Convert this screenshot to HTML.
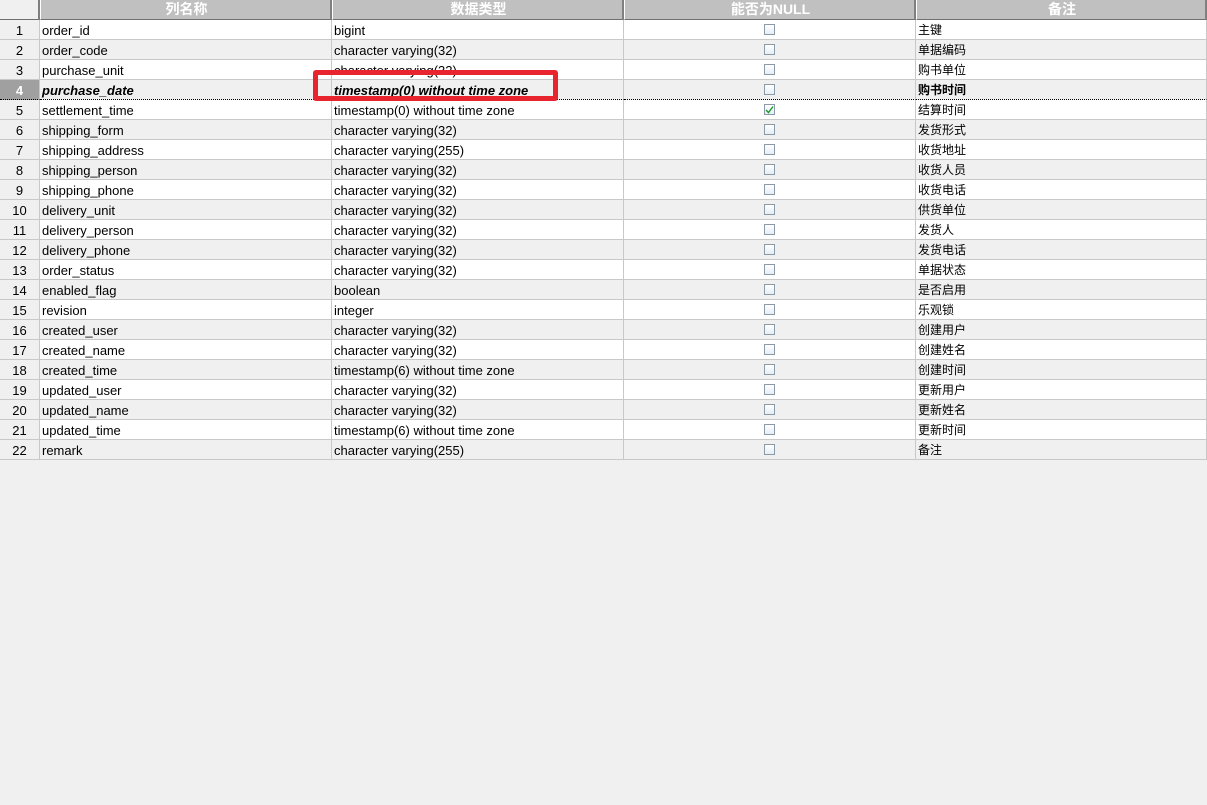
<!DOCTYPE html>
<html><head><meta charset="utf-8"><style>
*{margin:0;padding:0;box-sizing:border-box}
body{width:1207px;height:805px;background:#f0f0f0;font-family:"Liberation Sans","Noto Sans CJK SC",sans-serif;font-size:13px;color:#000;position:relative;overflow:hidden}
.r{position:absolute;left:0;width:1207px;height:20px}
.c{position:absolute;top:0;height:20px;line-height:21px;border-right:1px solid #c8c8c8;border-bottom:1px solid #c8c8c8;padding-left:2px;white-space:nowrap;overflow:hidden}
.n{left:0;width:40px;text-align:center;padding:0;background:#f0f0f0}
.a{left:40px;width:292px}.b{left:332px;width:292px}.d{left:624px;width:292px}.e{left:916px;width:291px;font-size:12px}
.h .c{background:#c0c0c0;color:#fff;font-weight:bold;text-align:center;font-size:14px;border-right:2px solid #808080;border-left:1px solid #fff;border-bottom:1px solid #707070;line-height:18px}
.h .n{background:#f0f0f0;border-left:none}
.cb{position:absolute;left:140px;top:4px;width:11px;height:11px;border:1px solid #8c9aa8;background:linear-gradient(#fff,#e4eef8)}
.sel .c{background:#bfcddb;font-weight:bold;font-style:italic;border-bottom:1px dotted #000}
.sel .e{font-style:normal}
.sel .n{background:#a0a0a0;color:#fff;font-style:normal}
.box{position:absolute;left:313px;top:70px;width:245px;height:31px;border:5px solid #e8242e;border-radius:3px}
</style></head><body>
<div class="r h" style="top:0"><div class="c n"></div><div class="c a">列名称</div><div class="c b">数据类型</div><div class="c d">能否为NULL</div><div class="c e">备注</div></div>
<div id="t"></div>
<script>
var d=[["order_id","bigint","主键"],["order_code","character varying(32)","单据编码"],["purchase_unit","character varying(32)","购书单位"],["purchase_date","timestamp(0) without time zone","购书时间"],["settlement_time","timestamp(0) without time zone","结算时间"],["shipping_form","character varying(32)","发货形式"],["shipping_address","character varying(255)","收货地址"],["shipping_person","character varying(32)","收货人员"],["shipping_phone","character varying(32)","收货电话"],["delivery_unit","character varying(32)","供货单位"],["delivery_person","character varying(32)","发货人"],["delivery_phone","character varying(32)","发货电话"],["order_status","character varying(32)","单据状态"],["enabled_flag","boolean","是否启用"],["revision","integer","乐观锁"],["created_user","character varying(32)","创建用户"],["created_name","character varying(32)","创建姓名"],["created_time","timestamp(6) without time zone","创建时间"],["updated_user","character varying(32)","更新用户"],["updated_name","character varying(32)","更新姓名"],["updated_time","timestamp(6) without time zone","更新时间"],["remark","character varying(255)","备注"]];
var h="";d.forEach(function(x,i){var bg=i%2?"#f0f0f0":"#fff";var chk=i==4?'<svg style="position:absolute;left:0;top:0" width="9" height="9" viewBox="0 0 9 9"><path d="M1 5 L3.5 7.5 L8 1.5" stroke="#1a9a2a" stroke-width="1.4" fill="none"/></svg>':'';
h+='<div class="r'+(i==3?' sel':'')+'" style="top:'+(20+i*20)+'px"><div class="c n">'+(i+1)+'</div><div class="c a" style="background:'+bg+'">'+x[0]+'</div><div class="c b" style="background:'+bg+'">'+x[1]+'</div><div class="c d" style="background:'+bg+'"><div class="cb">'+chk+'</div></div><div class="c e" style="background:'+bg+'">'+x[2]+'</div></div>';});
document.getElementById("t").innerHTML=h;
</script>
<div class="box"></div>
</body></html>
